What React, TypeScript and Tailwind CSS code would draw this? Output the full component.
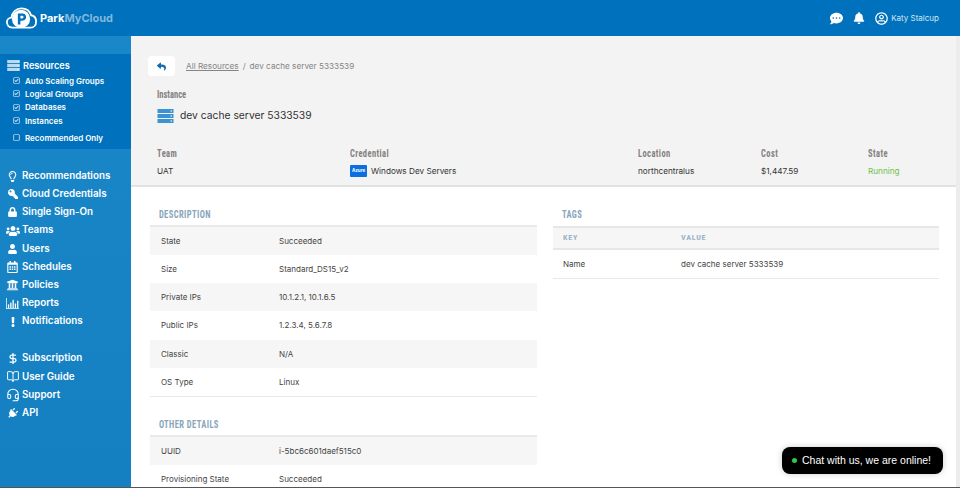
import { ReactNode } from 'react';
import { FaBell, FaCommentDots, FaUsers, FaUser, FaLock, FaKey, FaUniversity, FaExclamation, FaPlug, FaReply, FaRegCheckSquare, FaRegSquare, FaRegCalendarAlt, FaRegLightbulb, FaRegUserCircle } from 'react-icons/fa';
import { BookOpen, DollarSign, Headset } from 'lucide-react';

const body = { fontFamily: 'Inter, "Noto Sans", sans-serif' };
const narrow = { fontFamily: '"Liberation Sans Narrow", "Roboto Condensed", Roboto, sans-serif' };

const ServerIcon = ({ className, color }: { className: string; color: string }) => (
    <svg viewBox="0 0 16 14" className={className}>
        {[0, 5, 10].map(y => (
            <g key={y}>
                <rect x="0" y={y} width="16" height="4" fill={color} />
                <rect x="13" y={y + 1.5} width="1.5" height="1" fill="#ffffff" />
            </g>
        ))}
    </svg>
);

const Logo = () => (
    <svg viewBox="0 0 34 24" className="w-[31px] h-[22px]">
        <path d="M7 22.5 C3 22.5 1 19.5 1 16.5 C1 13.5 3.5 11.5 6 11.5 C6.5 6 11 1.5 17 1.5 C22 1.5 26 4.5 27.5 9 C31 9.5 33 12.5 33 16 C33 20 30.5 22.5 27 22.5 Z" fill="none" stroke="#ffffff" strokeWidth="2" />
        <circle cx="16.5" cy="13" r="10" fill="#ffffff" />
        <path d="M13 7 H18 C20.7 7 22 8.8 22 11 C22 13.2 20.7 15 18 15 H15.8 V19 H13 Z M15.8 9.5 V12.5 H17.8 C18.7 12.5 19.2 11.9 19.2 11 C19.2 10.1 18.7 9.5 17.8 9.5 Z" fill="#0071bc" fillRule="evenodd" />
    </svg>
);

const ReportsIcon = () => (
    <svg viewBox="0 0 14 12" className="w-[13px] h-[11px]" fill="#ffffff">
        <rect x="0" y="0" width="0.8" height="12" />
        <rect x="0" y="11.2" width="14" height="0.8" />
        <rect x="2" y="7" width="1.4" height="4" />
        <rect x="4.5" y="5" width="1.4" height="6" />
        <rect x="7" y="2" width="1.4" height="9" />
        <rect x="9.5" y="6" width="1.4" height="5" />
        <rect x="12" y="3" width="1.4" height="8" />
    </svg>
);

const SubItem = ({ label, checked = true, className = '' }: { label: string; checked?: boolean; className?: string }) => (
    <div className={`flex items-center h-[13.3px] pl-[13px] gap-[5px] text-[8px] font-semibold text-white ${className}`}>
        {checked ? <FaRegCheckSquare className="w-[7px] h-[7px]" /> : <FaRegSquare className="w-[7px] h-[7px]" />}
        <span>{label}</span>
    </div>
);

const NavItem = ({ icon, label }: { icon: ReactNode; label: string }) => (
    <div className="flex items-center h-[18.2px] text-[9.8px] font-semibold text-white">
        <span className="w-[22px] flex justify-center pl-[3px] shrink-0">{icon}</span>
        <span>{label}</span>
    </div>
);

const Summary = ({ title, className, children }: { title: string; className: string; children: ReactNode }) => (
    <div className={className}>
        <div className="text-[10.5px] font-bold tracking-[0.5px] text-[#86817f] h-[16px] leading-[14px] origin-left scale-x-[0.81]" style={narrow}>{title}</div>
        <div className="text-[8.2px] text-[#333333] h-[16px] flex items-center">{children}</div>
    </div>
);

const Row = ({ name, value, shaded }: { name: string; value: string; shaded?: boolean }) => (
    <div className={`flex items-center h-[28.2px] text-[8px] text-[#444444] ${shaded ? 'bg-[#f6f6f6]' : 'bg-white'}`}>
        <span className="w-[129px] pl-[11px] shrink-0">{name}</span>
        <span>{value}</span>
    </div>
);

const SectionTitle = ({ children }: { children: ReactNode }) => (
    <div className="text-[10.5px] font-bold tracking-[0.5px] text-[#88a5ba] pl-[11px] origin-left scale-x-[0.81]" style={narrow}>{children}</div>
);

export default function App() {
    return (
        <div className="w-[960px] h-[488px] overflow-hidden relative flex flex-col bg-white" style={body}>
            <header className="h-[36px] shrink-0 bg-[#0071bc] flex items-center pl-[6px] pr-[21px]">
                <Logo />
                <div className="ml-[3px] text-[11px] font-bold text-white">Park<span className="text-[#7fb8de]">MyCloud</span></div>
                <div className="ml-auto flex items-center text-white">
                    <FaCommentDots className="w-[13px] h-[13px]" />
                    <FaBell className="w-[12px] h-[12px] ml-[10px]" />
                    <FaRegUserCircle className="w-[13px] h-[13px] ml-[10px]" />
                    <span className="ml-[3px] text-[8px] text-[#d5e8f5]">Katy Stalcup</span>
                </div>
            </header>

            <div className="flex flex-1 min-h-0">
                <aside className="w-[131px] shrink-0 bg-gradient-to-b from-[#1a87c9] to-[#1480c2] flex flex-col">
                    <div className="h-[18px]" />
                    <div className="h-[95px] bg-[#0071bc] pt-[4px]">
                        <div className="flex items-center h-[15px] pl-[7px] gap-[3px] text-[9.2px] font-semibold text-white">
                            <ServerIcon className="w-[13px] h-[11px]" color="#b9d9f0" />
                            <span>Resources</span>
                        </div>
                        <div className="mt-[1px]">
                            <SubItem label="Auto Scaling Groups" />
                            <SubItem label="Logical Groups" />
                            <SubItem label="Databases" />
                            <SubItem label="Instances" />
                            <SubItem label="Recommended Only" checked={false} className="mt-[4px]" />
                        </div>
                    </div>
                    <div className="pt-[18px]">
                        <NavItem icon={<FaRegLightbulb className="w-[9px] h-[11px]" />} label="Recommendations" />
                        <NavItem icon={<FaKey className="w-[10px] h-[10px] -scale-x-100" />} label="Cloud Credentials" />
                        <NavItem icon={<FaLock className="w-[9px] h-[10px]" />} label="Single Sign-On" />
                        <NavItem icon={<FaUsers className="w-[14px] h-[12px]" />} label="Teams" />
                        <NavItem icon={<FaUser className="w-[9px] h-[10px]" />} label="Users" />
                        <NavItem icon={<FaRegCalendarAlt className="w-[11px] h-[12px]" />} label="Schedules" />
                        <NavItem icon={<FaUniversity className="w-[13px] h-[12px]" />} label="Policies" />
                        <NavItem icon={<ReportsIcon />} label="Reports" />
                        <NavItem icon={<FaExclamation className="w-[8px] h-[10px]" />} label="Notifications" />
                        <div className="h-[19px]" />
                        <NavItem icon={<DollarSign className="w-[12px] h-[13px]" strokeWidth={2.5} />} label="Subscription" />
                        <NavItem icon={<BookOpen className="w-[14px] h-[13px]" strokeWidth={1.8} />} label="User Guide" />
                        <NavItem icon={<Headset className="w-[14px] h-[14px]" strokeWidth={1.8} />} label="Support" />
                        <NavItem icon={<FaPlug className="w-[11px] h-[11px] rotate-45" />} label="API" />
                    </div>
                </aside>

                <main className="flex-1 min-w-0 flex flex-col border-r-[4px] border-[#ececec]">
                    <section className="h-[151px] shrink-0 bg-[#f3f3f3] border-b-[2px] border-[#e2e2e2] pl-[26px] pr-[20px] pt-[20px]">
                        <div className="flex items-center h-[20px] -ml-[9px]">
                            <button className="w-[27px] h-[20px] rounded-[4px] bg-white flex items-center justify-center">
                                <FaReply className="w-[11px] h-[9px] text-[#0f6cb3]" />
                            </button>
                            <div className="ml-[11px] text-[8.2px] text-[#858585]">
                                <span className="underline">All Resources</span>
                                <span className="mx-[4px]">/</span>
                                <span>dev cache server 5333539</span>
                            </div>
                        </div>
                        <div className="mt-[12px] text-[10.5px] font-bold text-[#86817f] h-[14px] leading-[14px] origin-left scale-x-[0.81]" style={narrow}>Instance</div>
                        <div className="mt-[6px] flex items-center h-[16px] gap-[6px]">
                            <ServerIcon className="w-[17px] h-[14px]" color="#3d93d1" />
                            <span className="text-[10.3px] text-[#333333]">dev cache server 5333539</span>
                        </div>
                        <div className="mt-[23px] flex">
                            <Summary title="Team" className="w-[193px]">UAT</Summary>
                            <Summary title="Credential" className="w-[288px]">
                                <span className="w-[17px] h-[12px] mr-[4px] rounded-[1px] bg-[#0b6fe0] text-white text-[4.5px] font-bold flex items-center justify-center">Azure</span>
                                Windows Dev Servers
                            </Summary>
                            <Summary title="Location" className="w-[123px]">northcentralus</Summary>
                            <Summary title="Cost" className="w-[107px]">$1,447.59</Summary>
                            <Summary title="State" className="w-[60px]"><span className="text-[#6cc24a]">Running</span></Summary>
                        </div>
                    </section>

                    <section className="flex-1 min-h-0 overflow-hidden flex pt-[20px] pl-[19px]">
                        <div className="w-[387px] shrink-0">
                            <SectionTitle>DESCRIPTION</SectionTitle>
                            <div className="mt-[2px] border-t-[2px] border-[#e9e9e9] border-b border-b-[#e9e9e9]">
                                <Row name="State" value="Succeeded" shaded />
                                <Row name="Size" value="Standard_DS15_v2" />
                                <Row name="Private IPs" value="10.1.2.1, 10.1.6.5" shaded />
                                <Row name="Public IPs" value="1.2.3.4, 5.6.7.8" />
                                <Row name="Classic" value="N/A" shaded />
                                <Row name="OS Type" value="Linux" />
                            </div>
                            <div className="mt-[20px]"><SectionTitle>OTHER DETAILS</SectionTitle></div>
                            <div className="mt-[2px] border-t-[2px] border-[#e9e9e9]">
                                <Row name="UUID" value="i-5bc6c601daef515c0" shaded />
                                <Row name="Provisioning State" value="Succeeded" />
                            </div>
                        </div>
                        <div className="w-[386px] ml-[16px] shrink-0">
                            <SectionTitle>TAGS</SectionTitle>
                            <div className="mt-[3px] h-[24px] flex items-center bg-[#f6f6f6] border-y-[2px] border-[#e7e7e7] text-[8px] font-bold tracking-[0.8px] text-[#9ab3c5]" style={narrow}>
                                <span className="w-[128px] pl-[10px]">KEY</span>
                                <span>VALUE</span>
                            </div>
                            <div className="h-[29px] flex items-center border-b border-[#e9e9e9] text-[8px] text-[#444444]">
                                <span className="w-[128px] pl-[10px]">Name</span>
                                <span>dev cache server 5333539</span>
                            </div>
                        </div>
                    </section>
                </main>
            </div>

            <div className="absolute left-[782px] top-[447px] w-[161px] h-[27px] rounded-[8px] bg-black flex items-center pl-[10px] gap-[5px] text-[10.5px] text-white font-medium shadow-[0_0_6px_rgba(0,0,0,0.2)]" style={{ fontFamily: '"Liberation Sans", sans-serif' }}>
                <span className="w-[5px] h-[5px] rounded-full bg-[#2ecc40]" />
                <span>Chat with us, we are online!</span>
            </div>
            <div className="absolute left-0 right-0 bottom-0 h-px bg-[#555555]" />
        </div>
    );
}
